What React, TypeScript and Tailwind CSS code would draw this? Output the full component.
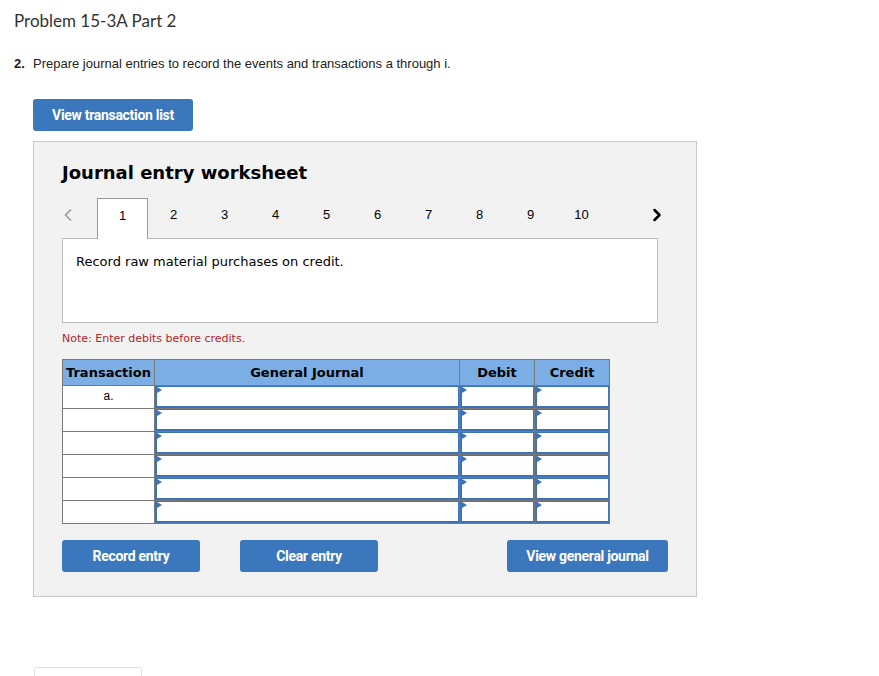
import { ChevronLeft, ChevronRight } from 'lucide-react';

const tabs = [1, 2, 3, 4, 5, 6, 7, 8, 9, 10];
const rows = ['a.', '', '', '', '', ''];

function EntryInput() {
  return (
    <div className="relative h-full w-full border border-b-2 border-l-2 border-[#3e72b6] bg-white">
      {/* dropdown marker */}
      <span className="absolute left-0 top-0 h-0 w-0 border-y-[3px] border-l-[5px] border-y-transparent border-l-[#3e72b6]" />
    </div>
  );
}

function BlueButton({ label, width }: { label: string; width: string }) {
  return (
    <button
      className={`${width} h-[32px] rounded-[3px] bg-[#3b77bc] text-[14px] font-bold tracking-[-0.3px] text-white`}
      style={{ fontFamily: 'Roboto, "Liberation Sans", sans-serif' }}
    >
      {label}
    </button>
  );
}

export default function App() {
  return (
    <div
      className="h-[676px] w-[879px] overflow-hidden bg-white"
      style={{ fontFamily: '"Liberation Sans", Arial, sans-serif' }}
    >
      {/* Heading */}
      <h1
        className="pl-[14px] pt-[10px] text-[17px] leading-[22px] text-[#333]"
        style={{ fontFamily: 'Lato, "Liberation Sans", sans-serif' }}
      >
        Problem 15-3A Part 2
      </h1>

      <div className="mt-[24px] flex pl-[14px] text-[13px] leading-[15px] text-[#222]">
        <span className="w-[19px] font-bold">2.</span>
        <span>Prepare journal entries to record the events and transactions a through i.</span>
      </div>

      <div className="ml-[33px] mt-[28px]">
        <BlueButton label="View transaction list" width="w-[160px]" />
      </div>

      {/* Worksheet */}
      <div
        className="ml-[33px] mt-[10px] h-[456px] w-[664px] border border-[#c8c8c8] bg-[#f2f2f2] pl-[28px]"
        style={{ fontFamily: '"DejaVu Sans", Verdana, sans-serif' }}
      >
        <h2 className="mt-[19px] text-[18px] font-bold leading-[24px] text-black">
          Journal entry worksheet
        </h2>

        {/* Tabs */}
        <div className="mt-[13px] flex h-[40px] w-[596px] items-stretch">
          <div className="-ml-[4px] flex w-[39px] items-center">
            <ChevronLeft className="-mt-[6px] h-[20px] w-[20px] text-[#999]" strokeWidth={2} />
          </div>
          {tabs.map((t) => (
            <div
              key={t}
              className={`relative z-10 flex w-[51px] items-start justify-center pt-[7px] text-[13px] text-black ${
                t === 1 ? '-mb-px border border-b-0 border-[#999] bg-white' : ''
              }`}
              style={{ fontFamily: '"Liberation Sans", Arial, sans-serif' }}
            >
              {t}
            </div>
          ))}
          <div className="ml-auto mr-[-9px] flex items-center">
            <ChevronRight className="-mt-[6px] h-[20px] w-[20px] text-black" strokeWidth={3} />
          </div>
        </div>

        <div className="h-[85px] w-[596px] border border-[#bbb] bg-white px-[13px] pt-[13px] text-[13px] text-black">
          Record raw material purchases on credit.
        </div>

        <p className="mt-[9px] text-[11px] leading-[14px] text-[#b0262b]">Note: Enter debits before credits.</p>

        {/* Journal table */}
        <table className="mt-[13px] w-[547px] table-fixed border-collapse text-black">
          <colgroup>
            <col className="w-[92px]" />
            <col className="w-[305px]" />
            <col className="w-[75px]" />
            <col className="w-[75px]" />
          </colgroup>
          <thead>
            <tr className="h-[26px] bg-[#7aaee5] text-[13px] font-bold">
              <th className="border border-[#7a7a7a] p-0">Transaction</th>
              <th className="border border-[#7a7a7a] p-0">General Journal</th>
              <th className="border border-[#7a7a7a] p-0">Debit</th>
              <th className="border border-[#7a7a7a] p-0">Credit</th>
            </tr>
          </thead>
          <tbody>
            {rows.map((r, i) => (
              <tr key={i} className="h-[23px]">
                <td
                  className="border border-[#7a7a7a] bg-white p-0 text-center align-top text-[12px] leading-[20px]"
                  style={{ fontFamily: '"Liberation Sans", Arial, sans-serif' }}
                >
                  {r}
                </td>
                <td className="h-[23px] border border-[#7a7a7a] p-0">
                  <EntryInput />
                </td>
                <td className="h-[23px] border border-[#7a7a7a] p-0">
                  <EntryInput />
                </td>
                <td className="h-[23px] border border-[#7a7a7a] p-0">
                  <EntryInput />
                </td>
              </tr>
            ))}
          </tbody>
        </table>

        <div className="mt-[16px] flex w-[606px] items-center">
          <BlueButton label="Record entry" width="w-[138px]" />
          <div className="ml-[40px]">
            <BlueButton label="Clear entry" width="w-[138px]" />
          </div>
          <div className="ml-auto">
            <BlueButton label="View general journal" width="w-[161px]" />
          </div>
        </div>
      </div>

      <div className="ml-[34px] mt-[70px] h-[20px] w-[108px] rounded-t-[3px] border border-[#e2e2e2] bg-white" />
    </div>
  );
}
